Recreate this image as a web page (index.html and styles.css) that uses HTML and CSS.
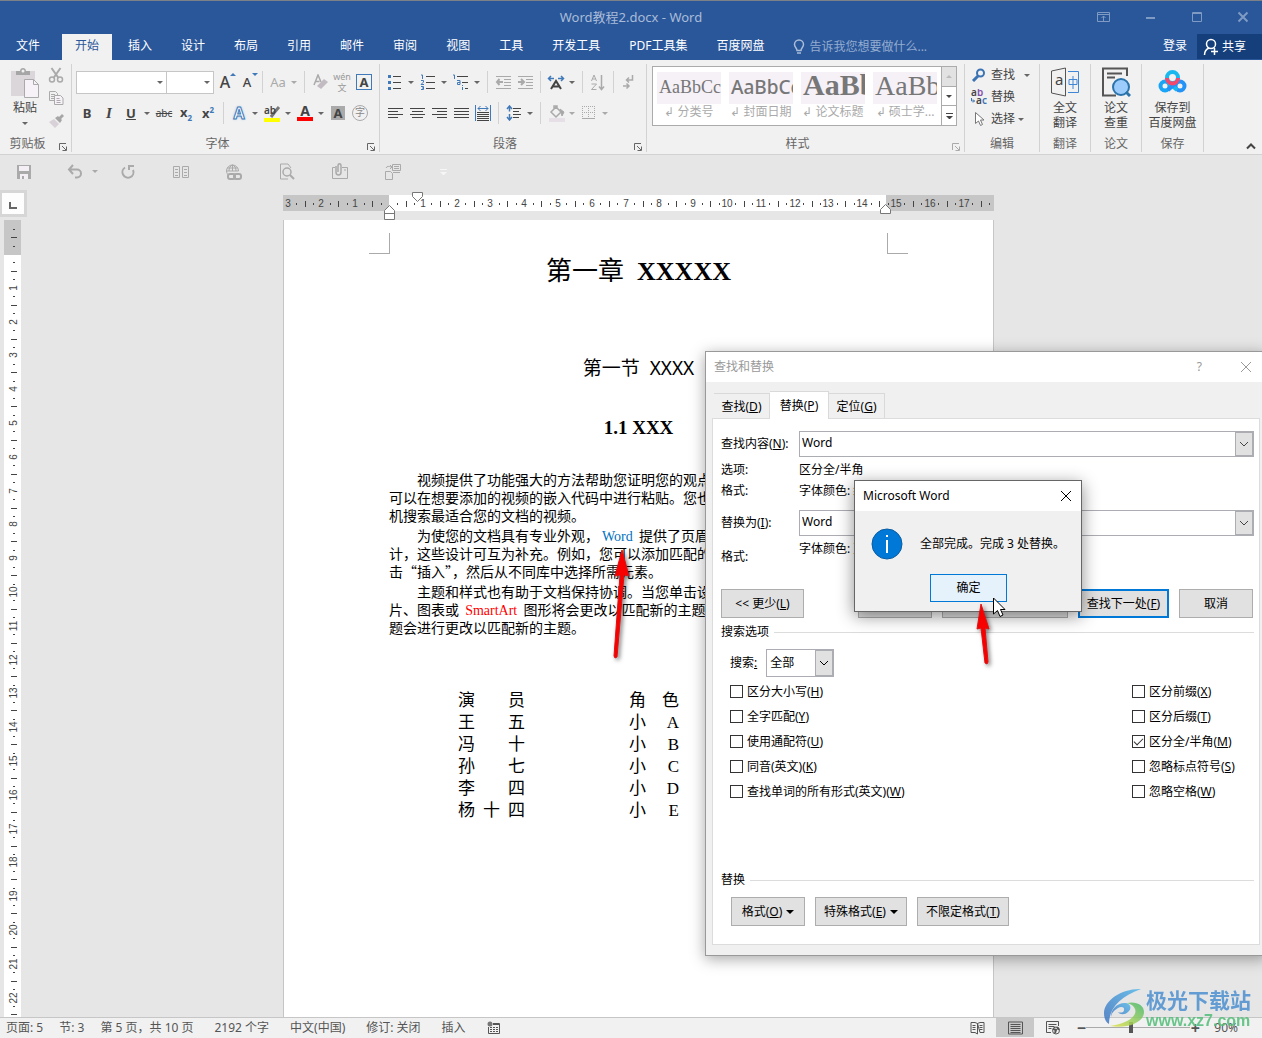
FILE: index.html
```html
<!DOCTYPE html>
<html lang="zh-CN">
<head>
  <meta charset="UTF-8" />
  <meta name="viewport" content="width=device-width, initial-scale=1.0"/>
  <title>Word教程2.docx - Word</title>
  <link rel="stylesheet" href="styles.css">
</head>
<body>
<div class="app">

  <!-- Title bar -->
  <header class="titlebar">
    <h1 class="doc-title">Word教程2.docx - Word</h1>
    <div class="window-buttons">
      <button aria-label="功能区显示选项"><svg width="14" height="12" viewBox="0 0 14 12"><path d="M.5 1.500h12v9H.5zM.5 3.500h12M6.500 10V5M4.500 7l2-2 2 2"/></svg></button>
      <button aria-label="最小化"><svg width="12" height="12" viewBox="0 0 12 12"><path d="M1 7h9" stroke-width="2"/></svg></button>
      <button aria-label="最大化"><svg width="12" height="12" viewBox="0 0 12 12"><path d="M1.500 1.500h9v9h-9zM1 2.500h10"/></svg></button>
      <button aria-label="关闭"><svg width="12" height="12" viewBox="0 0 12 12"><path d="M1.500 1.500l9 9M10.500 1.500l-9 9" stroke-width="2"/></svg></button>
    </div>
  </header>

  <!-- Ribbon tabs -->
  <nav class="tabs">
    <a class="tab tab-file" href="#">文件</a>
    <a class="tab active" href="#">开始</a>
    <a class="tab" href="#">插入</a>
    <a class="tab" href="#">设计</a>
    <a class="tab" href="#">布局</a>
    <a class="tab" href="#">引用</a>
    <a class="tab" href="#">邮件</a>
    <a class="tab" href="#">审阅</a>
    <a class="tab" href="#">视图</a>
    <a class="tab" href="#">工具</a>
    <a class="tab" href="#">开发工具</a>
    <a class="tab" href="#">PDF工具集</a>
    <a class="tab" href="#">百度网盘</a>
    <label class="tell-me">
      <svg width="12" height="16" viewBox="0 0 12 16"><path d="M4 11.500C4 9 1.500 8.500 1.500 5.500a4.500 4.500 0 019 0C10.500 8.500 8 9 8 11.500zM4 14h4" stroke-width="1.500"/></svg>
      <input type="text" placeholder="告诉我您想要做什么..." aria-label="告诉我您想要做什么">
    </label>
    <a class="login" href="#">登录</a>
    <button class="share">
      <svg width="17" height="18" viewBox="0 0 17 18"><circle cx="8" cy="6" r="4.500" stroke-width="1.500"/><path d="M1.500 17c0-4 2-6 4.500-7M11.500 10v7M8 13.500h7" stroke-width="1.500"/></svg>
      共享
    </button>
  </nav>

  <!-- Ribbon -->
  <section class="ribbon">
    <div class="group group-clipboard">
      <div class="clipboard-body">
        <button class="paste">
          <svg width="30" height="31" viewBox="0 0 30 31"><path d="M1 4h24v25H1z" fill="#dad6da" stroke="none"/><path d="M6 8V4h4c0-4 6-4 6 0h4v4z" fill="#a6a6a6" stroke="none"/><circle cx="13" cy="4" r="1.500" fill="#f1f1f1" stroke="none"/><path d="M14.500 12.500h9l5 5v13h-14z" fill="#f7f2f8" stroke="#aaa"/><path d="M23.500 12.500v5h5" stroke="#aaa"/></svg>
          <span>粘贴</span>
          <i class="caret"></i>
        </button>
        <div class="clip-tools">
          <button aria-label="剪切" class="muted"><svg width="16" height="16" viewBox="0 0 16 16"><path d="M3.500 1l7 10M12.500 1l-7 10" stroke-width="2"/><circle cx="4" cy="12.500" r="2.500" stroke-width="1.500"/><circle cx="12" cy="12.500" r="2.500" stroke-width="1.500"/></svg></button>
          <button aria-label="复制" class="muted"><svg width="16" height="16" viewBox="0 0 16 16"><path d="M1.500 1.500h6l2 2v7h-8zM3 4.500h4M3 6.500h3M3 8.500h3"/><path d="M6.500 5.500h6l2.500 2.500v6.500H6.500z" fill="#f7f2f8"/><path d="M8.500 8.500h3M8.500 10.500h4M8.500 12.500h4"/></svg></button>
          <button aria-label="格式刷" class="muted"><svg width="16" height="16" viewBox="0 0 16 16"><path d="M1 9l5-3 5 5-4 4z" fill="#d8d2d8" stroke="none"/><path d="M7 5l5 5 2-3-4-4zM11 4l3-3 2 2-3 3z" fill="#a6a6a6" stroke="none"/></svg></button>
        </div>
      </div>
      <div class="group-label"><span>剪贴板</span><button class="launcher" aria-label="剪贴板选项"><svg width="8" height="8" viewBox="0 0 8 8"><path d="M.5 7V.5H7M3 3l4 4M7.500 3.500v4h-4"/></svg></button></div>
    </div>

    <div class="group group-font">
      <div class="group-body">
        <div class="row">
          <div class="combo combo-font"><select aria-label="字体"><option></option></select><i class="caret"></i></div>
          <div class="combo combo-size"><select aria-label="字号"><option></option></select><i class="caret"></i></div>
          <button class="tool" aria-label="增大字号"><b class="letter">A</b><i class="mini-up"></i></button>
          <button class="tool" aria-label="减小字号"><b class="letter letter-sm">A</b><i class="mini-down"></i></button>
          <i class="sep"></i>
          <button class="tool muted" aria-label="更改大小写"><span class="case">Aa</span></button><i class="caret muted"></i>
          <i class="sep"></i>
          <button class="tool muted" aria-label="清除所有格式"><svg width="16" height="16" viewBox="0 0 16 16"><path d="M2 11L6 1l3 7M3.500 7.500h4" stroke-width="1.500"/><path d="M5 12l7-7 4 3-7 7z" fill="#c2bcc2" stroke="none"/></svg></button>
          <button class="tool pinyin" aria-label="拼音指南"><span>wén</span><span>文</span></button>
          <button class="tool" aria-label="字符边框"><b class="char-border">A</b></button>
        </div>
        <div class="row">
          <button class="tool" aria-label="加粗"><b>B</b></button>
          <button class="tool" aria-label="倾斜"><em class="italic">I</em></button>
          <button class="tool" aria-label="下划线"><b><u>U</u></b></button><i class="caret"></i>
          <button class="tool" aria-label="删除线"><s class="strike">abc</s></button>
          <button class="tool script" aria-label="下标"><b>x<sub>2</sub></b></button>
          <button class="tool script" aria-label="上标"><b>x<sup>2</sup></b></button>
          <i class="sep"></i>
          <button class="tool" aria-label="文本效果"><b class="effect">A</b></button><i class="caret"></i>
          <button class="tool" aria-label="突出显示"><svg width="18" height="17" viewBox="0 0 18 17"><path d="M1 13h16v4H1z" fill="#ff0" stroke="none"/><path d="M16 2l-6 7M11 8l-3 4" stroke="#777" stroke-width="3"/><text x="1" y="9" class="ico-text">ab</text></svg></button><i class="caret"></i>
          <button class="tool" aria-label="字体颜色"><b class="font-color">A</b></button><i class="caret"></i>
          <button class="tool" aria-label="字符底纹"><b class="char-shade">A</b></button>
          <button class="tool" aria-label="带圈字符"><span class="char-circle">字</span></button>
        </div>
      </div>
      <div class="group-label"><span>字体</span><button class="launcher" aria-label="字体选项"><svg width="8" height="8" viewBox="0 0 8 8"><path d="M.5 7V.5H7M3 3l4 4M7.500 3.500v4h-4"/></svg></button></div>
    </div>

    <div class="group group-para">
      <div class="group-body">
        <div class="row">
          <button class="tool" aria-label="项目符号"><svg width="16" height="16" viewBox="0 0 16 16"><path d="M6 2.500h8M6 8.500h8M6 14.500h8"/><path d="M1 1h3v3H1zM1 7h3v3H1zM1 13h3v3H1z" fill="#4079b8" stroke="none"/></svg></button><i class="caret"></i>
          <button class="tool" aria-label="编号"><svg width="16" height="16" viewBox="0 0 16 16"><path d="M6 2.500h9M6 8.500h9M6 14.500h9"/><path d="M1 1h1.500v4M1 6.500h2.500v1.500L1 10.500h3M1 12.500h2.500v3H1M2 14h1" stroke="#4079b8"/></svg></button><i class="caret"></i>
          <button class="tool" aria-label="多级列表"><svg width="18" height="16" viewBox="0 0 18 16"><path d="M5 2.500h11M10 8.500h6M13 14.500h3"/><path d="M1 1h1.500v4M5 6.500h3v4H5.500v-2H8M10.500 11v1M10.500 13v3" stroke="#4079b8"/></svg></button><i class="caret"></i>
          <i class="sep"></i>
          <button class="tool muted" aria-label="减少缩进量"><svg width="17" height="14" viewBox="0 0 17 14"><path d="M1 1.500h15M9 4.500h7M9 7.500h7M9 10.500h7M1 13.500h15"/><path d="M8 7H2M4.500 4L2 7l2.500 3" stroke-width="2"/></svg></button>
          <button class="tool muted" aria-label="增加缩进量"><svg width="17" height="14" viewBox="0 0 17 14"><path d="M1 1.500h15M9 4.500h7M9 7.500h7M9 10.500h7M1 13.500h15"/><path d="M1 7h6M4 4l3 3-3 3" stroke-width="2"/></svg></button>
          <i class="sep"></i>
          <button class="tool" aria-label="中文版式"><svg width="18" height="15" viewBox="0 0 18 15"><path d="M4 14l5-8 5 8M6 11.500h6" stroke-width="2"/><path d="M7 3.500H2M4 1L1.500 3.500 4 6M11 3.500h5M14 1l2.500 2.500L14 6" stroke="#4079b8" stroke-width="1.500"/></svg></button><i class="caret"></i>
          <i class="sep"></i>
          <button class="tool muted" aria-label="排序"><svg width="16" height="17" viewBox="0 0 16 17"><path d="M1.500 7L4 1l2.500 6M2.500 5h3M1.500 10h5l-5 5.500h5" /><path d="M11.500 1v14M9 12.500l2.500 3 2.500-3" stroke-width="1.500"/></svg></button>
          <i class="sep"></i>
          <button class="tool muted" aria-label="显示编辑标记"><svg width="14" height="16" viewBox="0 0 14 16"><path d="M10.500 1v5H5M7 3.500L4.500 6 7 8.500M1 12h6M4.500 9.500L7 12l-2.500 2.500" stroke-width="1.500"/></svg></button>
        </div>
        <div class="row">
          <button class="tool" aria-label="左对齐"><svg width="15" height="13" viewBox="0 0 15 13"><path d="M0 1.500h15M0 4.500h10M0 7.500h15M0 10.500h10"/></svg></button>
          <button class="tool" aria-label="居中"><svg width="15" height="13" viewBox="0 0 15 13"><path d="M0 1.500h15M2 4.500h11M0 7.500h15M2 10.500h11"/></svg></button>
          <button class="tool" aria-label="右对齐"><svg width="15" height="13" viewBox="0 0 15 13"><path d="M0 1.500h15M5 4.500h10M0 7.500h15M5 10.500h10"/></svg></button>
          <button class="tool" aria-label="两端对齐"><svg width="15" height="13" viewBox="0 0 15 13"><path d="M0 1.500h15M0 4.500h15M0 7.500h15M0 10.500h15"/></svg></button>
          <button class="tool" aria-label="分散对齐"><svg width="16" height="16" viewBox="0 0 16 16"><path d="M2 7.500h12M2 9.500h12M2 11.500h12M2 13.500h12M2 15.500h12"/><path d="M.5 0v16M15.500 0v16M3 3.500h10M5.500 1L3 3.500 5.500 6M10.500 1L13 3.500 10.500 6" stroke="#4079b8"/></svg></button>
          <i class="sep"></i>
          <button class="tool" aria-label="行距"><svg width="16" height="16" viewBox="0 0 16 16"><path d="M7 3.500h8M7 6.500h6M7 9.500h8M7 12.500h6"/><path d="M3.500 1.500v5M3.500 9v5.500M1 4l2.500-3L6 4M1 12l2.500 3L6 12" stroke="#4079b8" stroke-width="1.500"/></svg></button><i class="caret"></i>
          <i class="sep"></i>
          <button class="tool muted" aria-label="底纹"><svg width="17" height="17" viewBox="0 0 17 17"><path d="M1 13h16v4H1z" fill="#e6dfe6" stroke="none"/><path d="M3 7l5-5 5 5-5 5zM6 5V1h3v3" stroke-width="1.500"/><path d="M12 4l4 3-2 4z" fill="#a6a6a6"/></svg></button><i class="caret muted"></i>
          <button class="tool muted" aria-label="边框"><svg width="14" height="14" viewBox="0 0 14 14"><path d="M.5 0v12M12.500 0v12M0 .5h13M6.500 0v12M0 6.500h13" stroke-dasharray="1 1"/><path d="M0 12.500h13"/></svg></button><i class="caret muted"></i>
        </div>
      </div>
      <div class="group-label"><span>段落</span><button class="launcher" aria-label="段落选项"><svg width="8" height="8" viewBox="0 0 8 8"><path d="M.5 7V.5H7M3 3l4 4M7.500 3.500v4h-4"/></svg></button></div>
    </div>

    <div class="group group-styles">
      <div class="gallery">
        <div class="gallery-items">
          <button class="style-item"><span class="preview preview-song">AaBbCc</span><span class="style-name">↲ 分类号</span></button>
          <button class="style-item"><span class="preview preview-hei">AaBbCc</span><span class="style-name">↲ 封面日期</span></button>
          <button class="style-item"><span class="preview preview-title">AaBb</span><span class="style-name">↲ 论文标题</span></button>
          <button class="style-item"><span class="preview preview-large">AaBb</span><span class="style-name">↲ 硕士学...</span></button>
        </div>
        <div class="gallery-scroll">
          <button aria-label="上一行" class="off"><i class="tri-up"></i></button>
          <button aria-label="下一行"><i class="tri-down"></i></button>
          <button aria-label="其他"><i class="tri-more"></i></button>
        </div>
      </div>
      <div class="group-label"><span>样式</span><button class="launcher muted" aria-label="样式选项"><svg width="8" height="8" viewBox="0 0 8 8"><path d="M.5 7V.5H7M3 3l4 4M7.500 3.500v4h-4"/></svg></button></div>
    </div>

    <div class="group group-edit">
      <div class="edit-list">
        <button><svg width="16" height="14" viewBox="0 0 16 14"><circle cx="9.500" cy="5" r="3.500" stroke="#3b73b3" stroke-width="2"/><path d="M7 8l-5 5" stroke="#3b73b3" stroke-width="3"/></svg>查找<i class="caret caret-far"></i></button>
        <button><svg width="16" height="16" viewBox="0 0 16 16"><text x="0" y="7" class="ico-text">a</text><text x="6" y="7" class="ico-text violet">b</text><text x="5" y="15" class="ico-text">a</text><text x="11" y="15" class="ico-text blue">c</text><path d="M.5 9v3h3M2 10.500L3.500 12 2 13.500" stroke="#3b73b3"/></svg>替换</button>
        <button><svg width="16" height="16" viewBox="0 0 16 16"><path d="M4.500 1.500v11l3-2.500 2 4.500 2-1-2-4.500h3.500z" fill="#fff" stroke="#777"/></svg>选择<i class="caret"></i></button>
      </div>
      <div class="group-label"><span>编辑</span></div>
    </div>

    <div class="group group-big">
      <button class="big-button">
        <svg width="30" height="30" viewBox="0 0 30 30"><path d="M1.500 4L15.500 1v28L1.500 26z" stroke="#555"/><path d="M18 4.500h10.500v21H18" stroke="#3f86d6"/><text x="5" y="18" class="big-a">a</text><path d="M19 12.500h8v5h-8zM23 9v13" stroke="#3f86d6"/></svg>
        <span>全文<br>翻译</span>
      </button>
      <div class="group-label"><span>翻译</span></div>
    </div>

    <div class="group group-big">
      <button class="big-button">
        <svg width="30" height="30" viewBox="0 0 30 30"><path d="M26 9V1.500H2v27h13" stroke="#555" stroke-width="2"/><path d="M6 6.500h15M6 10.500h8" stroke="#555" stroke-width="2"/><circle cx="20" cy="20" r="8" fill="#9cccfb" stroke="#2a73ab" stroke-width="2"/><path d="M25 25l4 4" stroke="#2a73ab" stroke-width="3"/></svg>
        <span>论文<br>查重</span>
      </button>
      <div class="group-label"><span>论文</span></div>
    </div>

    <div class="group group-pan">
      <button class="big-button">
        <svg width="30" height="30" viewBox="0 0 30 30"><circle cx="7" cy="19" r="4.500" stroke="#19a5f5" stroke-width="4"/><circle cx="22" cy="19" r="4.500" stroke="#2393f8" stroke-width="4"/><path d="M10 15l9 8" stroke="#19b9f0" stroke-width="4"/><path d="M19 15l-9 8" stroke="#2393f8" stroke-width="4"/><circle cx="14.500" cy="10.500" r="5.500" fill="#f1f1f1" stroke="#19b9f0" stroke-width="4"/><path d="M9 11a5.500 5.500 0 0011 0" stroke="#f2496d" stroke-width="4"/></svg>
        <span>保存到<br>百度网盘</span>
      </button>
      <div class="group-label"><span>保存</span></div>
    </div>

    <button class="collapse" aria-label="折叠功能区"><svg width="10" height="7" viewBox="0 0 10 7"><path d="M1 5.500l4-4 4 4" stroke-width="2"/></svg></button>
  </section>

  <!-- Quick access toolbar -->
  <div class="quick-bar">
    <button aria-label="保存"><svg width="16" height="16" viewBox="0 0 16 16"><path d="M1 1h14v14H1z" fill="#aaa" stroke="none"/><path d="M3 2h10v5H3zM4 10h8v5H4z" fill="#f4eff4" stroke="none"/><path d="M6 12h2v3H6z" fill="#aaa" stroke="none"/></svg></button>
    <button aria-label="撤消" class="undo"><svg width="16" height="16" viewBox="0 0 16 16"><path d="M2 5.500h8a4 4 0 010 8H8M6 1L2 5.500 6 10" stroke-width="2"/></svg><i class="caret muted"></i></button>
    <button aria-label="重复"><svg width="16" height="16" viewBox="0 0 16 16"><path d="M5 3.500A5.500 5.500 0 1013 6M9 6V2h5" stroke-width="2"/></svg></button>
    <button aria-label="并排"><svg width="18" height="14" viewBox="0 0 18 14"><path d="M1.500 1.500h6v11h-6zM10.500 1.500h6v11h-6zM3 4.500h3M3 7.500h3M3 10.500h3M12 4.500h3M12 7.500h3M12 10.500h3"/></svg></button>
    <button aria-label="超链接"><svg width="18" height="18" viewBox="0 0 18 18"><path d="M1.500 8a6 6 0 0112 0M1.500 8h12M7.500 2v6M4 8c0-3 1-5 3.500-6M11 8c0-3-1-5-3.500-6M2 5h11M1.500 8c0 2 1 3 2 4"/><rect x="3" y="11" width="7" height="5" rx="2" stroke-width="2"/><rect x="9" y="11" width="7" height="5" rx="2" stroke-width="2"/></svg></button>
    <button aria-label="打印预览"><svg width="16" height="17" viewBox="0 0 16 17"><path d="M12 5l-3-4H1.500v15H9"/><circle cx="8" cy="9" r="4" stroke-width="1.500"/><path d="M11 12l4 4" stroke-width="2"/></svg></button>
    <button aria-label="附件"><svg width="18" height="17" viewBox="0 0 18 17"><path d="M4 4.500H1.500v11h15v-11H11M13 7h2"/><path d="M5 3v6c0 4 5 4 5 0V3c0-3-3-3-3 0v6" stroke-width="1.500"/></svg></button>
    <button aria-label="切换窗口"><svg width="18" height="17" viewBox="0 0 18 17"><path d="M1.500 8.500h5l2 2v6h-7zM8.500 1.500h8v6h-8zM10 3.500h5M10 5.500h5M9 9.500h7M2 5c1-2 3-2 5-1M6 6l2-2-2-2"/></svg></button>
    <button aria-label="自定义快速访问工具栏" class="faint"><i class="tri-more"></i></button>
  </div>

  <!-- Workspace -->
  <main class="workspace">
    <div class="side">
      <button class="tab-stop" aria-label="制表符"><svg width="9" height="9" viewBox="0 0 9 9"><path d="M1 1v6h7" stroke-width="2"/></svg></button>
      <svg class="ruler-v" id="rulerV"></svg>
    </div>
    <div class="doc-area">
      <svg class="ruler-h" id="rulerH"></svg>
      <article class="page">
        <div class="crop-marks"><i class="crop-left"></i><i class="crop-right"></i></div>
        <h2 class="chapter">第一章  <b>XXXXX</b></h2>
        <h3 class="section-title">第一节&nbsp; XXXX</h3>
        <h4 class="sub-title">1.1 XXX</h4>
        <div class="text">
          <p>视频提供了功能强大的方法帮助您证明您的观点。<br>可以在想要添加的视频的嵌入代码中进行粘贴。您也<br>机搜索最适合您的文档的视频。</p>
          <p>为使您的文档具有专业外观，<span class="hit">Word</span> 提供了页眉、<br>计，这些设计可互为补充。例如，您可以添加匹配的<br>击“插入”，然后从不同库中选择所需元素。</p>
          <p>主题和样式也有助于文档保持协调。当您单击设<br>片、图表或 <span class="smart">SmartArt</span> 图形将会更改以匹配新的主题<br>题会进行更改以匹配新的主题。</p>
        </div>
        <table class="cast">
          <tr><td>演 员</td><td>角 色</td></tr>
          <tr><td>王 五</td><td>小 A</td></tr>
          <tr><td>冯 十</td><td>小 B</td></tr>
          <tr><td>孙 七</td><td>小 C</td></tr>
          <tr><td>李 四</td><td>小 D</td></tr>
          <tr><td>杨 十 四</td><td>小 E</td></tr>
        </table>
      </article>
    </div>
  </main>

  <!-- Status bar -->
  <footer class="status">
    <span class="st-near">页面: 5</span>
    <span class="st-near">节: 3</span>
    <span>第 5 页，共 10 页</span>
    <span>2192 个字</span>
    <span>中文(中国)</span>
    <span>修订: 关闭</span>
    <span>插入</span>
    <svg width="14" height="14" viewBox="0 0 14 14"><path d="M6 2.500h6.500v10h-11V6M6 3.500h6"/><path d="M3 6.500h9M3 8.500h9M3 10.500h9" stroke-dasharray="2 1"/><circle cx="3" cy="3" r="2.500" fill="#777" stroke="none"/></svg>
    <div class="views">
      <button aria-label="阅读视图"><svg width="15" height="14" viewBox="0 0 15 14"><path d="M7.500 13V2.500L5 1.500H1v10h4zM7.500 2.500L10 1.500h4v10h-4zM2.500 4.500h3M2.500 6.500h3M2.500 8.500h3M9.500 4.500h3M9.500 6.500h3M9.500 8.500h3"/></svg></button>
      <button aria-label="页面视图" class="current"><svg width="15" height="14" viewBox="0 0 15 14"><path d="M.5 1h14v12H.5zM2.500 3.500h10M2.500 5.500h10M2.500 7.500h10M2.500 9.500h10M2.500 11.500h10"/></svg></button>
      <button aria-label="Web 版式视图"><svg width="15" height="14" viewBox="0 0 15 14"><path d="M5 11.500H.5v-11h12V5M2.500 3.500h8M2.500 5.500h6M2.500 7.500h3"/><circle cx="10" cy="9.500" r="3.500"/><path d="M7 8l3 1-1 3M11 6l2 3" stroke-width="2"/></svg></button>
    </div>
    <div class="zoom">
      <button aria-label="缩小">−</button>
      <input type="range" min="0" max="100" value="43" aria-label="显示比例">
      <button aria-label="放大">+</button>
      <span>90%</span>
    </div>
  </footer>

  <!-- Find and replace -->
  <section class="dialog" role="dialog" aria-label="查找和替换">
    <header class="dialog-title">
      <span>查找和替换</span>
      <button aria-label="帮助">?</button>
      <button aria-label="关闭"><svg width="12" height="12" viewBox="0 0 12 12"><path d="M1 1l10 10M11 1L1 11"/></svg></button>
    </header>
    <div class="dialog-tabs">
      <button>查找(<u>D</u>)</button>
      <button class="selected">替换(<u>P</u>)</button>
      <button>定位(<u>G</u>)</button>
    </div>
    <div class="panel">
      <div class="field">
        <label for="findText">查找内容(<u>N</u>):</label>
        <div class="drop"><input id="findText" type="text" value="Word"><button aria-label="展开查找列表"><svg width="10" height="6" viewBox="0 0 10 6"><path d="M1 1l4 4 4-4"/></svg></button></div>
      </div>
      <div class="info"><span>选项:</span><span>区分全/半角</span></div>
      <div class="info"><span>格式:</span><span>字体颜色: 红色</span></div>
      <div class="field field-replace">
        <label for="replaceText">替换为(<u>I</u>):</label>
        <div class="drop"><input id="replaceText" type="text" value="Word"><button aria-label="展开替换列表"><svg width="10" height="6" viewBox="0 0 10 6"><path d="M1 1l4 4 4-4"/></svg></button></div>
      </div>
      <div class="info info-format"><span>格式:</span><span>字体颜色: 蓝色</span></div>
      <div class="actions">
        <button class="btn btn-less">&lt;&lt; 更少(<u>L</u>)</button>
        <button class="btn btn-replace">替换(<u>R</u>)</button>
        <button class="btn btn-all">全部替换(<u>A</u>)</button>
        <button class="btn btn-next">查找下一处(<u>F</u>)</button>
        <button class="btn">取消</button>
      </div>
      <div class="divider">搜索选项</div>
      <div class="search-row">
        <label for="scope">搜索<u>:</u></label>
        <div class="scope"><select id="scope"><option>全部</option></select><i><svg width="10" height="6" viewBox="0 0 10 6"><path d="M1 1l4 4 4-4"/></svg></i></div>
      </div>
      <div class="checks">
        <div>
          <label><input type="checkbox">区分大小写(<u>H</u>)</label>
          <label><input type="checkbox">全字匹配(<u>Y</u>)</label>
          <label><input type="checkbox">使用通配符(<u>U</u>)</label>
          <label><input type="checkbox">同音(英文)(<u>K</u>)</label>
          <label><input type="checkbox">查找单词的所有形式(英文)(<u>W</u>)</label>
        </div>
        <div class="checks-right">
          <label><input type="checkbox">区分前缀(<u>X</u>)</label>
          <label><input type="checkbox">区分后缀(<u>T</u>)</label>
          <label><input type="checkbox" checked>区分全/半角(<u>M</u>)</label>
          <label><input type="checkbox">忽略标点符号(<u>S</u>)</label>
          <label><input type="checkbox">忽略空格(<u>W</u>)</label>
        </div>
      </div>
      <div class="divider">替换</div>
      <div class="format-row">
        <button class="btn">格式(<u>O</u>)<i class="tri-black"></i></button>
        <button class="btn btn-wide">特殊格式(<u>E</u>)<i class="tri-black"></i></button>
        <button class="btn btn-wide">不限定格式(<u>T</u>)</button>
      </div>
    </div>
  </section>

  <!-- Message box -->
  <section class="msgbox" role="alertdialog" aria-label="Microsoft Word">
    <header class="msg-title"><span>Microsoft Word</span><button aria-label="关闭"><svg width="12" height="12" viewBox="0 0 12 12"><path d="M1 1l10 10M11 1L1 11"/></svg></button></header>
    <div class="msg-body">
      <svg width="32" height="32" viewBox="0 0 32 32"><circle cx="16" cy="16" r="15" fill="#0078d7" stroke="#0a5ca3"/><path d="M16 12v13M16 7v2" stroke="#fff" stroke-width="2"/></svg>
      <p>全部完成。完成 3 处替换。</p>
    </div>
    <button class="btn-ok">确定</button>
  </section>

  <!-- Pointers drawn over the windows -->
  <svg class="arrow arrow-word" width="24" height="112" viewBox="0 0 24 112"><path d="M13 1l7 26-5-1-7 82-2 1-1-2 6-81-5 1z"/></svg>
  <svg class="arrow arrow-ok" width="22" height="66" viewBox="0 0 22 66"><path d="M8 2l8 25-4-1 3 34-1 2-2-1-4-35-4 1z"/></svg>
  <svg class="cursor" width="14" height="21" viewBox="0 0 14 21"><path d="M1.500 1v16l4-3.500 2.500 6 3-1.500-2.500-5.500H13z"/></svg>

  <div class="watermark">
    <svg width="42" height="42" viewBox="0 0 42 42" stroke="none">
      <defs>
        <linearGradient id="wmBlue" x1="0" y1="1" x2="1" y2="0"><stop offset="0" stop-color="#3f74c0"/><stop offset="1" stop-color="#56b8ea"/></linearGradient>
        <linearGradient id="wmGreen" x1="0" y1="1" x2="1" y2="0"><stop offset="0" stop-color="#e6e24a"/><stop offset="1" stop-color="#45b870"/></linearGradient>
      </defs>
      <path d="M38 1C20 0 1 12 1 25c0 6 2 9 5 11 0-15 10-27 32-35z" fill="url(#wmBlue)"/>
      <path d="M8 30C7 21 15 14 23 15c5 1 6 6 2 9-3 3-8 3-10 0 2 1 6 1 6-2 1-3-3-4-6-2-5 3-7 6-7 10z" fill="url(#wmBlue)"/>
      <path d="M24 15c9-2 17 2 17 9 0 11-18 17-34 14 15-2 28-9 25-17-1-3-4-5-8-6z" fill="url(#wmGreen)"/>
    </svg>
    <div><strong>极光下载站</strong><span>www.xz7.com</span></div>
  </div>
</div>

<script>
  // Ruler marks: one number per centimetre, dots on the quarters, a tick on the half
  const PX_PER_CM = 33.8;
  const NS = 'http://www.w3.org/2000/svg';

  function add(svg, name, attrs, text) {
    const el = document.createElementNS(NS, name);
    for (const key in attrs) el.setAttribute(key, attrs[key]);
    if (text) el.textContent = text;
    svg.appendChild(el);
  }

  function drawRuler(svg, zero, length, vertical) {
    for (let q = -13; q < 100; q++) {
      const pos = Math.round(zero + q * PX_PER_CM / 4);
      if (pos < 1 || pos > length - 2 || q === 0) continue;
      if (q % 4 === 0) {
        const n = String(Math.abs(q / 4));
        add(svg, 'text', vertical
          ? { x: 0, y: 0, transform: 'translate(13 ' + pos + ') rotate(-90)' }
          : { x: pos, y: 12 }, n);
      } else {
        const size = q % 2 === 0 ? 6 : 2;
        add(svg, 'rect', vertical
          ? { x: 10 - size / 2, y: pos, width: size, height: 1 }
          : { x: pos, y: 9 - size / 2, width: 1, height: size });
      }
    }
  }

  const h = document.getElementById('rulerH');
  add(h, 'path', { class: 'shade', d: 'M0 0h106v16H0zM603 0h108v16H603z' });
  drawRuler(h, 106, 711, false);
  add(h, 'path', { class: 'marker', d: 'M129.500-2.500h10v4l-5 5-5-5zM101.500 24.500v-9l5-5 5 5v9zM101.500 18.500h10M597.500 18.500v-4l5-5 5 5v4z' });

  const v = document.getElementById('rulerV');
  add(v, 'path', { class: 'shade', d: 'M0 0h17v35H0z' });
  drawRuler(v, 34, 797, true);
</script>
</body>
</html>
```

FILE: styles.css
```css
* {
  box-sizing: border-box;
}
body {
  margin: 0;
  font-family: "Noto Sans", "Noto Sans CJK SC", sans-serif;
  font-size: 12px;
  line-height: 16px;
  color: #444;
  background: #e6e6e6;
}
button, input, select {
  font: inherit;
  color: inherit;
  background: none;
  border: 0;
  padding: 0;
  margin: 0;
}
a {
  color: inherit;
  text-decoration: none;
}
svg {
  display: block;
  flex: none;
  fill: none;
  stroke: currentColor;
}
h1, h2, h3, h4, p {
  margin: 0;
  font-weight: normal;
}
.app {
  position: relative;
  display: flex;
  flex-direction: column;
  height: 100vh;
  overflow: hidden;
}

/* title bar */
.titlebar {
  display: grid;
  grid-template-columns: 1fr auto 1fr;
  align-items: center;
  height: 34px;
  flex: none;
  padding-bottom: 2px;
  border-top: 1px solid #7c8187;
  background: #2a579a;
  color: #a9bcd8;
}
.doc-title {
  grid-column: 2;
  font-size: 13px;
}
.window-buttons {
  display: flex;
  justify-content: flex-end;
  gap: 34px;
  padding-right: 13px;
  color: #7f9bc4;
}

/* tabs */
.tabs {
  display: flex;
  align-items: stretch;
  gap: 3px;
  height: 26px;
  flex: none;
  background: #2a579a;
  color: #fff;
  line-height: 24px;
  white-space: nowrap;
}
.tab {
  padding: 0 13px;
}
.tab-file {
  padding: 0 19px 0 16px;
}
.tab.active {
  background: #f1f1f1;
  color: #2a579a;
}
.tell-me {
  display: flex;
  align-items: center;
  flex: 1;
  gap: 4px;
  padding-left: 13px;
  color: #a9bcd8;
}
.tell-me input {
  width: 140px;
}
.tell-me input::placeholder {
  color: #94acd0;
}
.login {
  padding-right: 7px;
}
.share {
  display: flex;
  align-items: center;
  gap: 2px;
  width: 65px;
  height: 25px;
  padding-left: 6px;
  background: #153f7a;
}

/* ribbon */
.ribbon {
  display: flex;
  height: 95px;
  flex: none;
  padding: 4px 0 2px;
  background: #f1f1f1;
  border-bottom: 1px solid #d2d2d2;
}
.group {
  display: flex;
  flex-direction: column;
  justify-content: space-between;
  border-right: 1px solid #d2d2d2;
}
.group-clipboard { width: 72px; }
.group-font { width: 308px; }
.group-para { width: 267px; }
.group-styles { width: 318px; }
.group-edit { width: 75px; }
.group-big { width: 51px; }
.group-pan { width: 62px; }
.group-body {
  display: flex;
  flex-direction: column;
  gap: 7px;
  padding: 6px 0 0 4px;
}
.group-label {
  display: flex;
  height: 16px;
  color: #666;
  text-align: center;
}
.group-label span {
  flex: 1;
}
.launcher {
  width: 16px;
  padding: 5px 0 0 4px;
}
.row {
  display: flex;
  align-items: center;
  height: 24px;
}
.tool {
  position: relative;
  display: flex;
  align-items: center;
  justify-content: center;
  width: 22px;
  height: 22px;
  font-size: 13px;
}
.sep {
  width: 1px;
  height: 22px;
  margin: 0 4px;
  background: #d2d2d2;
}
.caret {
  width: 11px;
  height: 3px;
  color: #666;
}
.caret::before {
  content: "";
  display: block;
  width: 0;
  margin-left: 2px;
  border: 3px solid transparent;
  border-top-color: currentColor;
  border-bottom: 0;
}
.muted, .caret.muted {
  color: #aaa;
}
.combo {
  display: flex;
  align-items: center;
  height: 23px;
  border: 1px solid #c6c6c6;
  background: #fff;
}
.combo select {
  flex: 1;
  min-width: 0;
  height: 100%;
  appearance: none;
}
.combo-font { width: 91px; }
.combo-size {
  width: 47px;
  border-left: 0;
}
.clipboard-body {
  display: flex;
  gap: 6px;
  padding: 3px 0 0 8px;
}
.paste {
  display: flex;
  flex-direction: column;
  align-items: center;
  gap: 2px;
  width: 34px;
}
.paste .caret {
  width: 10px;
  margin-top: 4px;
}
.clip-tools {
  display: flex;
  flex-direction: column;
  gap: 7px;
}
.letter {
  font-size: 16px;
  font-weight: 500;
}
.letter-sm {
  font-size: 13px;
}
.mini-up, .mini-down {
  position: absolute;
  top: 2px;
  right: 0;
  border: 3px solid transparent;
}
.mini-up {
  border-bottom-color: #4079b8;
  border-top: 0;
}
.mini-down {
  border-top-color: #4079b8;
  border-bottom: 0;
}
.italic {
  font: italic bold 15px/16px "Liberation Serif", serif;
}
.pinyin {
  flex-direction: column;
  font-size: 9px;
  line-height: 11px;
  color: #999;
}
.char-border {
  width: 16px;
  height: 16px;
  border: 1px solid #4079b8;
  line-height: 14px;
}
.strike {
  font-size: 10px;
}
.script sub, .script sup {
  font-size: 8px;
  line-height: 8px;
  color: #4079b8;
}
.effect {
  font-size: 16px;
  color: #fff;
  -webkit-text-stroke: 1px #4079b8;
  text-shadow: 0 0 3px #8db4de;
}
.font-color {
  width: 16px;
  height: 16px;
  border-bottom: 4px solid #f00;
  font-size: 14px;
  line-height: 12px;
}
.char-shade {
  width: 14px;
  height: 14px;
  background: #aaa;
  line-height: 14px;
}
.char-circle {
  width: 16px;
  height: 16px;
  border: 1px solid #aaa;
  border-radius: 50%;
  font-size: 10px;
  line-height: 13px;
  color: #888;
}
.ico-text {
  font-size: 10px;
  font-weight: 600;
  fill: #444;
  stroke: none;
}
.ico-text.violet { fill: #8450a8; }
.ico-text.blue { fill: #3b73b3; }
.big-a {
  font-size: 15px;
  fill: #444;
  stroke: none;
}
.gallery {
  display: flex;
  height: 60px;
  margin: 2px 7px 0 5px;
  border: 1px solid #ababab;
  background: #fff;
}
.gallery-items {
  display: flex;
  flex: 1;
  gap: 8px;
  padding: 4px;
}
.style-item {
  width: 64px;
}
.preview {
  display: block;
  height: 32px;
  padding-left: 2px;
  overflow: hidden;
  background: #f5f1f7;
  color: #777;
  text-align: left;
}
.preview-song {
  font: 18px/30px "Liberation Serif", serif;
}
.preview-hei {
  font: 500 19px/30px "Noto Sans", sans-serif;
}
.preview-title {
  font: bold 30px/26px "Liberation Serif", serif;
}
.preview-large {
  font: 28px/28px "Liberation Serif", serif;
}
.style-name {
  display: block;
  color: #aaa;
  white-space: nowrap;
}
.gallery-scroll {
  display: flex;
  flex-direction: column;
  width: 15px;
}
.gallery-scroll button {
  display: flex;
  flex: 1;
  align-items: center;
  justify-content: center;
  border-left: 1px solid #ababab;
  border-bottom: 1px solid #ababab;
}
.gallery-scroll button:last-child {
  border-bottom: 0;
}
.gallery-scroll .off {
  background: #e2e2e2;
  color: #bbb;
}
.tri-up, .tri-down {
  border: 3px solid transparent;
}
.tri-up {
  border-bottom-color: currentColor;
  border-top: 0;
}
.tri-down {
  border-top-color: currentColor;
  border-bottom: 0;
}
.tri-more {
  width: 7px;
  height: 6px;
  border-top: 1px solid currentColor;
}
.tri-more::before {
  content: "";
  display: block;
  width: 1px;
  margin-top: 2px;
  border: 3px solid transparent;
  border-top-color: currentColor;
  border-bottom: 0;
}
.edit-list {
  display: flex;
  flex-direction: column;
  padding-left: 6px;
}
.edit-list button {
  display: flex;
  align-items: center;
  gap: 4px;
  height: 22px;
}
.edit-list .caret {
  margin-left: -3px;
}
.edit-list .caret-far {
  margin-left: 3px;
}
.big-button {
  display: flex;
  flex-direction: column;
  align-items: center;
  gap: 3px;
  padding-top: 3px;
  line-height: 15px;
}
.collapse {
  margin: auto 6px 2px auto;
}

/* quick access bar */
.quick-bar {
  display: flex;
  align-items: center;
  gap: 9px;
  height: 35px;
  flex: none;
  padding: 0 0 2px 2px;
  color: #aaa;
}
.quick-bar button {
  display: flex;
  align-items: center;
  justify-content: center;
  width: 44px;
}
.quick-bar .undo {
  gap: 7px;
  width: 42px;
  padding-left: 12px;
}
.quick-bar .faint {
  width: 38px;
  color: #f6f6f6;
}

/* workspace */
.workspace {
  display: flex;
  flex: 1;
  min-height: 0;
  overflow: hidden;
}
.side {
  display: flex;
  flex-direction: column;
  gap: 3px;
  width: 27px;
  flex: none;
}
.tab-stop {
  display: flex;
  justify-content: center;
  align-items: flex-end;
  height: 27px;
  padding-bottom: 4px;
  border: 3px solid #d6d6d6;
  border-left-width: 2px;
  background: #fdfdfd;
  color: #666;
}
.ruler-v {
  flex: 1;
  width: 17px;
  margin-left: 4px;
  background: #fff;
}
.ruler-h {
  width: 711px;
  height: 16px;
  margin: 5px 0 9px;
  background: #fff;
  overflow: visible;
}
.ruler-h text, .ruler-v text {
  font: 10px "Liberation Sans", sans-serif;
  text-anchor: middle;
}
.ruler-h text, .ruler-v text, .ruler-h rect, .ruler-v rect {
  fill: #444;
  stroke: none;
}
.shade {
  fill: #c6c6c6;
  stroke: none;
}
.marker {
  fill: #fff;
  stroke: #777;
}
.doc-area {
  display: flex;
  flex: 1;
  flex-direction: column;
  align-items: center;
  padding-right: 12px;
}
.page {
  flex: 1;
  width: 711px;
  padding-top: 13px;
  border: 1px solid #c6c6c6;
  border-width: 0 1px;
  background: #fff;
  color: #000;
  text-align: center;
}
.crop-marks {
  display: flex;
  justify-content: space-between;
  padding: 0 85px;
}
.crop-marks i {
  width: 21px;
  height: 21px;
  border-bottom: 1px solid #aaa;
}
.crop-left {
  border-right: 1px solid #aaa;
}
.crop-right {
  border-left: 1px solid #aaa;
}
.chapter {
  margin-top: 1px;
  font: 26px/34px "Liberation Serif", "Noto Sans CJK SC", serif;
  white-space: pre;
}
.section-title {
  margin-top: 63px;
  font-size: 19px;
  line-height: 32px;
}
.sub-title {
  margin-top: 32px;
  font: bold 19px/24px "Liberation Serif", serif;
}
.text {
  margin: 30px 0 0 105px;
  font: 14px/18px "Noto Sans CJK SC", sans-serif;
  text-align: left;
  white-space: nowrap;
}
.text p {
  margin-bottom: 2px;
  text-indent: 28px;
}
.hit, .smart {
  padding: 0 3px;
  font-family: "Liberation Serif", serif;
  line-height: 12px;
}
.hit {
  color: #0070c0;
}
.smart {
  color: #f00;
}
.cast {
  margin: 54px 0 0 174px;
  border-spacing: 0;
  font: 17px/22px "Liberation Serif", "Noto Sans CJK SC", serif;
}
.cast td {
  width: 67px;
  padding: 0;
  text-align-last: justify;
}
.cast td + td {
  width: 154px;
  padding-left: 104px;
}

/* status bar */
.status {
  display: flex;
  align-items: center;
  gap: 21px;
  height: 21px;
  flex: none;
  padding: 0 0 1px 6px;
  border-top: 1px solid #c6c6c6;
  background: #f1f1f1;
  color: #555;
}
.st-near {
  margin-right: -5px;
}
.views {
  display: flex;
  align-self: stretch;
  margin-left: auto;
}
.views button {
  display: flex;
  align-items: center;
  justify-content: center;
  width: 38px;
}
.views .current {
  background: #c8c8c8;
}
.zoom {
  display: flex;
  align-items: center;
  margin-left: -17px;
  padding-right: 24px;
}
.zoom button {
  width: 10px;
  font-size: 16px;
  font-weight: bold;
}
.zoom span {
  margin-left: 14px;
}
.zoom input {
  width: 104px;
  height: 14px;
  appearance: none;
  background: linear-gradient(#aaa, #aaa) center / 100% 1px no-repeat;
}
.zoom input::-webkit-slider-thumb {
  appearance: none;
  width: 4px;
  height: 11px;
  background: #555;
}

/* find and replace window */
.dialog {
  position: absolute;
  left: 705px;
  top: 351px;
  width: 562px;
  padding-bottom: 10px;
  border: 1px solid #999;
  background: #f0f0f0;
  color: #000;
  box-shadow: 0 3px 14px rgba(0, 0, 0, 0.35);
}
.dialog-title {
  display: flex;
  align-items: center;
  gap: 38px;
  height: 30px;
  padding: 0 14px 0 8px;
  background: #fff;
  color: #999;
}
.dialog-title span {
  flex: 1;
}
.dialog-tabs {
  display: flex;
  align-items: flex-end;
  height: 36px;
  padding: 0 8px;
}
.dialog-tabs button {
  width: 56px;
  height: 25px;
  padding-top: 2px;
  border: 1px solid #d9d9d9;
  border-bottom: 0;
  border-left: 0;
}
.dialog-tabs .selected {
  width: 59px;
  height: 28px;
  margin-bottom: -1px;
  padding: 0;
  background: #fff;
}
.panel {
  margin: 0 6px;
  padding: 12px 5px 18px 8px;
  border: 1px solid #dcdcdc;
  background: #fff;
}
.field {
  display: grid;
  grid-template-columns: 78px 1fr;
  align-items: center;
}
.drop {
  display: flex;
  height: 26px;
  border: 1px solid #abadb3;
}
.drop input {
  flex: 1;
  padding: 0 2px 2px;
}
.drop button {
  display: flex;
  align-items: center;
  justify-content: center;
  width: 18px;
  border: 1px solid #abadb3;
  background: #e1e1e1;
  color: #444;
}
.info {
  display: grid;
  grid-template-columns: 78px 1fr;
  margin-top: 5px;
}
.field-replace {
  margin-top: 11px;
}
.info-format {
  margin-top: 5px;
}
.info-format span:first-child {
  padding-top: 8px;
}
.actions {
  display: flex;
  gap: 10px;
  margin-top: 24px;
}
.btn {
  width: 74px;
  height: 29px;
  border: 1px solid #adadad;
  background: #e1e1e1;
  white-space: nowrap;
}
.btn-less {
  width: 83px;
  margin-right: 44px;
}
.btn-all {
  width: 126px;
}
.btn-next {
  width: 91px;
  border: 2px solid #0078d7;
}
.divider {
  display: flex;
  align-items: center;
  gap: 5px;
  margin-top: 6px;
}
.divider::after {
  content: "";
  flex: 1;
  height: 1px;
  background: #dcdcdc;
}
.search-row {
  display: flex;
  align-items: center;
  gap: 9px;
  margin: 9px 0 0 9px;
}
.scope {
  display: flex;
  width: 68px;
  height: 28px;
  border: 1px solid #abadb3;
}
.scope select {
  flex: 1;
  min-width: 0;
  padding-left: 3px;
  appearance: none;
}
.scope i {
  display: flex;
  align-items: center;
  justify-content: center;
  width: 18px;
  border: 1px solid #abadb3;
  background: #e1e1e1;
}
.checks {
  display: flex;
  justify-content: space-between;
  margin: 2px 0 0 9px;
}
.checks-right {
  width: 122px;
}
.checks label {
  display: flex;
  align-items: center;
  height: 25px;
  white-space: nowrap;
}
.checks input {
  display: grid;
  place-items: center;
  width: 13px;
  height: 13px;
  margin-right: 4px;
  border: 1px solid #333;
  background: #fff;
  appearance: none;
}
.checks input:checked::before {
  content: "";
  width: 8px;
  height: 4px;
  border: 1px solid #333;
  border-width: 0 0 1px 1px;
  transform: translateY(-1px) rotate(-45deg);
}
.checks + .divider {
  margin-top: 68px;
}
.format-row {
  display: flex;
  gap: 10px;
  margin: 9px 0 0 10px;
}
.btn-wide {
  width: 92px;
}
.tri-black {
  display: inline-block;
  margin-left: 4px;
  vertical-align: 2px;
  border: 4px solid transparent;
  border-top-color: #000;
  border-bottom: 0;
}

/* message box */
.msgbox {
  position: absolute;
  left: 854px;
  top: 480px;
  width: 228px;
  height: 132px;
  border: 1px solid #666;
  background: #f0f0f0;
  color: #000;
  box-shadow: 0 4px 16px rgba(0, 0, 0, 0.45);
}
.msg-title {
  display: flex;
  align-items: center;
  justify-content: space-between;
  height: 30px;
  padding: 0 9px 0 8px;
  background: #fff;
}
.msg-body {
  display: flex;
  align-items: center;
  gap: 17px;
  padding: 17px 0 14px 16px;
}
.btn-ok {
  display: block;
  width: 77px;
  height: 28px;
  margin-left: 75px;
  border: 1px solid #0078d7;
  background: #e5f1fb;
}

/* overlays */
.arrow {
  position: absolute;
  fill: #f80000;
  stroke: #e01010;
  stroke-width: 1;
  filter: drop-shadow(2px 2px 2px rgba(0, 0, 0, 0.5));
}
.arrow-word {
  left: 609px;
  top: 549px;
}
.arrow-ok {
  left: 973px;
  top: 602px;
}
.cursor {
  position: absolute;
  left: 992px;
  top: 597px;
  fill: #fff;
  stroke: #000;
}
.watermark {
  position: absolute;
  right: 11px;
  bottom: 8px;
  display: flex;
  align-items: center;
  gap: 1px;
  opacity: 0.85;
  pointer-events: none;
}
.watermark svg {
  stroke: none;
}
.watermark div {
  display: flex;
  flex-direction: column;
}
.watermark strong {
  font-size: 21px;
  line-height: 24px;
  color: #4d90cf;
}
.watermark span {
  font: bold 16px/18px "Liberation Sans", sans-serif;
  color: #52bd79;
}
```
